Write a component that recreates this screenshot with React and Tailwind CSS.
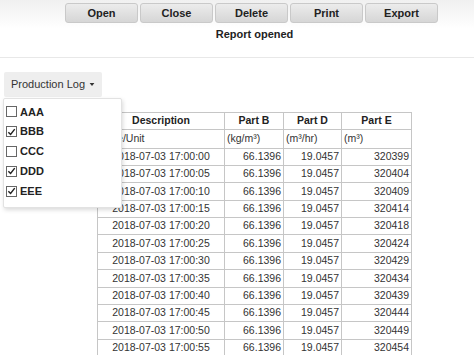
import React from 'react'

const buttons = ['Open', 'Close', 'Delete', 'Print', 'Export']

const options = [
  { label: 'AAA', checked: false },
  { label: 'BBB', checked: true },
  { label: 'CCC', checked: false },
  { label: 'DDD', checked: true },
  { label: 'EEE', checked: true },
]

const totals = ['320399', '320404', '320409', '320414', '320418', '320424', '320429', '320434', '320439', '320444', '320449', '320454']

const rows = ['00', '05', '10', '15', '20', '25', '30', '35', '40', '45', '50', '55'].map((s, i) => ({
  time: `2018-07-03 17:00:${s}`,
  b: '66.1396',
  d: '19.0457',
  e: totals[i],
}))

function Check({ checked }) {
  return (
    <span className="flex h-[11px] w-[11px] items-center justify-center border border-[#666] bg-white">
      {checked && (
        <svg viewBox="0 0 10 10" className="h-[10px] w-[10px]">
          <path d="M1.5 5.2 L4 7.8 L8.6 1.8" fill="none" stroke="#222" strokeWidth="1.6" />
        </svg>
      )}
    </span>
  )
}

export default function App() {
  return (
    <div className="relative h-[355px] w-[474px] overflow-hidden bg-white font-['Liberation_Sans',Arial,sans-serif] text-[10.5px] text-[#222]">
      {/* Toolbar */}
      <div className="h-[58px] border-b border-[#e8e8e8] bg-gradient-to-b from-[#f0f0f0] via-white to-white">
        <div className="flex gap-[2px] pl-[65px] pt-[3px]">
          {buttons.map((b) => (
            <button
              key={b}
              className="h-[20px] w-[73px] rounded-[3px] border border-[#c9c9c9] bg-gradient-to-b from-[#ececec] to-[#d6d6d6] text-[11px] font-bold text-[#222]"
            >
              {b}
            </button>
          ))}
        </div>
        <div className="w-[438px] pl-[71px] pt-[3px] text-center text-[11px] font-bold">Report opened</div>
      </div>

      {/* Content */}
      <div className="pl-[4px] pt-[14px]">
        <button className="flex h-[25px] w-[98px] items-center justify-center gap-[4px] rounded-[2px] bg-[#eeeeee] text-[11px] text-[#333]">
          Production Log
          <svg viewBox="0 0 8 5" className="h-[3px] w-[6px]">
            <path d="M0 0 L8 0 L4 5 Z" fill="#333" />
          </svg>
        </button>
      </div>

      <div className="ml-[97px] mt-[15px] w-[315px] border-l border-t border-[#c6c6c6]">
        <div className="flex h-[17px] border-b border-[#c6c6c6] font-bold">
          <div className="flex w-[127px] items-center justify-center border-r border-[#c6c6c6]">Description</div>
          <div className="flex w-[59px] items-center justify-center border-r border-[#c6c6c6]">Part B</div>
          <div className="flex w-[58px] items-center justify-center border-r border-[#c6c6c6]">Part D</div>
          <div className="flex w-[70px] items-center justify-center border-r border-[#c6c6c6]">Part E</div>
        </div>
        <div className="flex h-[18.5px] border-b border-[#c6c6c6] text-[#333]">
          <div className="flex w-[127px] items-center border-r border-[#c6c6c6] pl-[2px]">Time/Unit</div>
          <div className="flex w-[59px] items-center border-r border-[#c6c6c6] pl-[2px]">(kg/m³)</div>
          <div className="flex w-[58px] items-center border-r border-[#c6c6c6] pl-[2px]">(m³/hr)</div>
          <div className="flex w-[70px] items-center border-r border-[#c6c6c6] pl-[2px]">(m³)</div>
        </div>
        {rows.map((r) => (
          <div key={r.time} className="flex h-[17.4px] border-b border-[#c6c6c6] text-[#333]">
            <div className="flex w-[127px] items-center justify-center border-r border-[#c6c6c6]">{r.time}</div>
            <div className="flex w-[59px] items-center justify-end border-r border-[#c6c6c6] pr-[2px]">{r.b}</div>
            <div className="flex w-[58px] items-center justify-end border-r border-[#c6c6c6] pr-[2px]">{r.d}</div>
            <div className="flex w-[70px] items-center justify-end border-r border-[#c6c6c6] pr-[2px]">{r.e}</div>
          </div>
        ))}
      </div>

      {/* Dropdown menu */}
      <div className="absolute left-[3px] top-[98px] h-[110px] w-[119px] rounded-[2px] border border-[#e2e2e2] bg-white pt-[3px] shadow-[1px_2px_4px_rgba(0,0,0,0.15)]">
        {options.map((o) => (
          <div key={o.label} className="flex h-[19.8px] items-center gap-[3px] pl-[2px] text-[11px] font-bold">
            <Check checked={o.checked} />
            {o.label}
          </div>
        ))}
      </div>
    </div>
  )
}
